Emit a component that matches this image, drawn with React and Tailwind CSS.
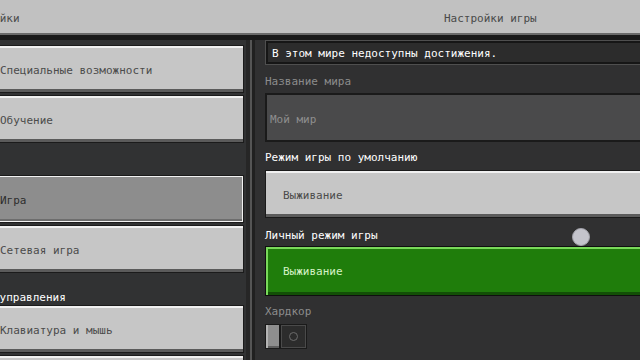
import React from 'react';

const font = { fontFamily: '"DejaVu Sans Mono", "Liberation Mono", monospace' };

function SideButton({ label, selected = false }) {
  return (
    <div
      className={`h-[48px] -ml-[4px] border border-[#1b1b1b] flex items-center pl-[3px] text-[11px] ${
        selected
          ? 'bg-[#8d8d8d] text-[#2e2e2e] shadow-[inset_0_0_0_1px_#f2f2f2,inset_0_-3px_0_#6d6d6d]'
          : 'bg-[#c6c6c6] text-[#4b4b4b] shadow-[inset_0_2px_0_#f0f0f0,inset_0_-3px_0_#5b5b5b]'
      }`}
    >
      <span className="pt-[5px]">{label}</span>
    </div>
  );
}

function Label({ children, muted = false, pad }) {
  return (
    <div className={`h-[28px] flex items-center text-[11px] ${pad} ${muted ? 'text-[#8c8c8c]' : 'text-white'}`}>
      {children}
    </div>
  );
}

export default function App() {
  return (
    <div className="w-[640px] h-[360px] overflow-hidden bg-[#313233] flex flex-col relative" style={font}>
      {/* header */}
      <div className="h-[33px] shrink-0 bg-[#c1c1c1] flex items-center pt-[5px] text-[11px] text-[#4a4a4a]">
        <div className="w-[255px] overflow-hidden whitespace-nowrap">
          <span className="-ml-[40px] inline-block">Настройки</span>
        </div>
        <div className="pl-[189px]">Настройки игры</div>
      </div>
      <div className="h-[2px] shrink-0 bg-[#6a6a6a]" />
      <div className="h-[5px] shrink-0 bg-[#1a1a1a]" />

      <div className="flex flex-1">
        {/* left column */}
        <div className="w-[246px] shrink-0 flex flex-col pt-[5px] pr-[2px]">
          <div className="flex flex-col gap-[2px]">
            <SideButton label="Специальные возможности" />
            <SideButton label="Обучение" />
          </div>
          <div className="h-[32px]" />
          <div className="flex flex-col gap-[2px]">
            <SideButton label="Игра" selected />
            <SideButton label="Сетевая игра" />
          </div>
          <div className="h-[32px] flex items-center pt-[18px] text-[11px] text-white overflow-hidden whitespace-nowrap">
            <span className="-ml-[60px]">Элементы управления</span>
          </div>
          <div className="flex flex-col gap-[2px]">
            <SideButton label="Клавиатура и мышь" />
            <SideButton label="" />
          </div>
        </div>

        {/* divider */}
        <div className="w-[4px] shrink-0 bg-[#262626]" />
        <div className="w-[2px] shrink-0 bg-[#555555]" />
        <div className="w-[3px] shrink-0 bg-[#202020]" />

        {/* right column */}
        <div className="flex-1 flex flex-col pl-[10px] -mr-[20px] bg-[#303031]">
          <div className="h-[25px] border border-[#4f4f4f] shrink-0">
            <div className="h-full border-2 border-[#161616] bg-[#2c2c2c] flex items-center pl-[4px] pt-[3px] text-[11px] text-white">
              В этом мире недоступны достижения.
            </div>
          </div>
          <Label muted pad="pt-[7px]">Название мира</Label>
          <div className="h-[49px] shrink-0 border-2 border-[#1a1a1a] bg-[#4a4a4b] flex items-center pl-[3px] pt-[5px] text-[11px] text-[#8f8f8f]">
            Мой мир
          </div>
          <Label pad="pt-[5px]">Режим игры по умолчанию</Label>
          <div className="h-[48px] shrink-0 border border-[#1a1a1a] bg-[#c6c6c6] shadow-[inset_0_2px_0_#f0f0f0,inset_0_-3px_0_#5b5b5b] flex items-center pl-[17px] pt-[5px] text-[11px] text-[#4b4b4b]">
            Выживание
          </div>
          <Label pad="pt-[9px]">Личный режим игры</Label>
          <div className="h-[50px] shrink-0 border border-[#0f0f0f] bg-[#1f7d0b] shadow-[inset_2px_2px_0_#79d95a,inset_0_-3px_0_#124f06] flex items-center pl-[17px] pt-[3px] text-[11px] text-[#d6f3c6]">
            Выживание
          </div>
          <Label muted pad="pt-[5px] h-[27px]">Хардкор</Label>
          <div className="flex h-[25px] w-[42px]">
            <div className="w-[15px] h-full bg-[#8e8e8e] border border-[#1a1a1a] shadow-[inset_2px_0_0_#b4b4b4,inset_0_-2px_0_#5e5e5e]" />
            <div className="flex-1 h-full bg-[#2c2c2c] border border-[#1a1a1a] shadow-[inset_0_0_0_1px_#4a4a4a] flex items-center justify-center">
              <div className="w-[9px] h-[9px] rounded-full border-[1.5px] border-[#6b6b6b]" />
            </div>
          </div>
        </div>
      </div>

      {/* pointer */}
      <div className="absolute left-[572px] top-[228px] w-[18px] h-[18px] rounded-full bg-[#c4c4cc] border border-[#a0a0a8]" />
    </div>
  );
}
